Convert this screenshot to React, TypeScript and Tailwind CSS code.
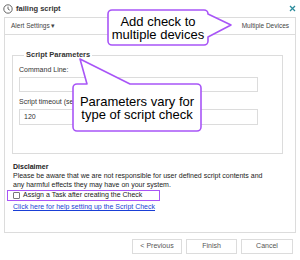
import React from "react";

const Callouts: React.FC = () => (
  <>
    <svg
      className="absolute left-0 top-0"
      width={300}
      height={260}
      viewBox="0 0 300 260"
    >
      <path
        d="M112,10 H204 A4,4 0 0 1 208,14 L231,25 L208,37 V41 A4,4 0 0 1 204,45 H112 A4,4 0 0 1 108,41 V14 A4,4 0 0 1 112,10 Z"
        fill="#ffffff"
        stroke="#a855f7"
        strokeWidth={1.6}
        strokeLinejoin="round"
      />
      <path
        d="M77,84 H87 L80,59 L130,84 H197 A4,4 0 0 1 201,88 V127 A4,4 0 0 1 197,131 H77 A4,4 0 0 1 73,127 V88 A4,4 0 0 1 77,84 Z"
        fill="#ffffff"
        stroke="#a855f7"
        strokeWidth={1.6}
        strokeLinejoin="round"
      />
    </svg>
    <div className="absolute left-[108px] top-[10px] w-[100px] h-[35px] flex flex-col items-center justify-center text-[13px] leading-[13px] text-black">
      <span>Add check to</span>
      <span>multiple devices</span>
    </div>
    <div className="absolute left-[73px] top-[84px] w-[128px] h-[47px] flex flex-col items-center justify-center text-[13px] leading-[13px] text-black">
      <span>Parameters vary for</span>
      <span>type of script check</span>
    </div>
  </>
);

export default function App() {
  return (
    <div
      className="relative w-[300px] h-[260px] bg-white overflow-hidden text-[#333]"
      style={{ fontFamily: '"Liberation Sans", Arial, sans-serif' }}
    >
      {/* title bar */}
      <div className="h-[17px] flex items-center justify-between pl-[3px] pr-[4px]">
        <div className="flex items-center gap-[3px]">
          <svg width="10" height="10" viewBox="0 0 10 10">
            <circle cx="5" cy="5" r="4.2" fill="none" stroke="#555" strokeWidth="0.9" />
            <path d="M5 2.6 V5 L6.8 6.2" fill="none" stroke="#555" strokeWidth="0.9" />
          </svg>
          <span className="text-[7.5px] font-bold text-[#333]">failing script</span>
        </div>
        <svg width="7" height="7" viewBox="0 0 7 7">
          <path d="M1 1 L6 6 M6 1 L1 6" stroke="#2b8c9c" strokeWidth="1.3" />
        </svg>
      </div>

      {/* tab bar */}
      <div className="mx-[4px] h-[18px] border border-[#dcdcdc] flex items-center justify-between pl-[6px] pr-[6px] text-[6.5px] text-[#444]">
        <span>Alert Settings ▾</span>
        <span>Multiple Devices</span>
      </div>

      {/* main panel */}
      <div className="mx-[4px] h-[198px] border border-t-0 border-[#dcdcdc] pt-[16px] px-[7px]">
        <fieldset className="w-[271px] h-[103px] border border-[#dcdcdc] px-[6px] pt-[7px]">
          <legend className="ml-[5px] px-[2px] text-[7.5px] font-bold text-[#333] leading-[8px]">
            Script Parameters
          </legend>
          <div className="text-[7px] leading-[8px]">Command Line:</div>
          <div className="mt-[3px] w-[239px] h-[15px] border border-[#dcdcdc] bg-white" />
          <div className="mt-[6px] text-[7px] leading-[8px]">Script timeout (seconds):</div>
          <div className="mt-[3px] w-[239px] h-[16px] border border-[#dcdcdc] bg-white flex items-center px-[4px] text-[7px]">
            120
          </div>
        </fieldset>

        <div className="mt-[8px] pl-[1px] text-[7px] leading-[9px] text-[#222]">
          <div className="font-bold">Disclaimer</div>
          <div>
            Please be aware that we are not responsible for user defined script contents and
          </div>
          <div>any harmful effects they may have on your system.</div>
        </div>
        <div className="-ml-[5px] mt-[1px] w-[153px] h-[11px] border-[1.5px] border-[#a855f7] flex items-center gap-[3px] pl-[5px] text-[7px] text-[#222]">
          <span className="w-[7px] h-[7px] border border-[#777] bg-white rounded-[1px]" />
          <span>Assign a Task after creating the Check</span>
        </div>
        <div className="mt-[1px] pl-[1px] text-[7px] leading-[9px] text-[#1a3fd6] underline">
          Click here for help setting up the Script Check
        </div>
      </div>

      {/* buttons */}
      <div className="mt-[6px] pr-[7px] flex justify-end gap-[4px] text-[7px] text-[#555]">
        <div className="w-[50px] h-[15px] border border-[#dcdcdc] flex items-center justify-center">
          &lt; Previous
        </div>
        <div className="w-[51px] h-[15px] border border-[#dcdcdc] flex items-center justify-center">
          Finish
        </div>
        <div className="w-[52px] h-[15px] border border-[#dcdcdc] flex items-center justify-center">
          Cancel
        </div>
      </div>

      <Callouts />
    </div>
  );
}
